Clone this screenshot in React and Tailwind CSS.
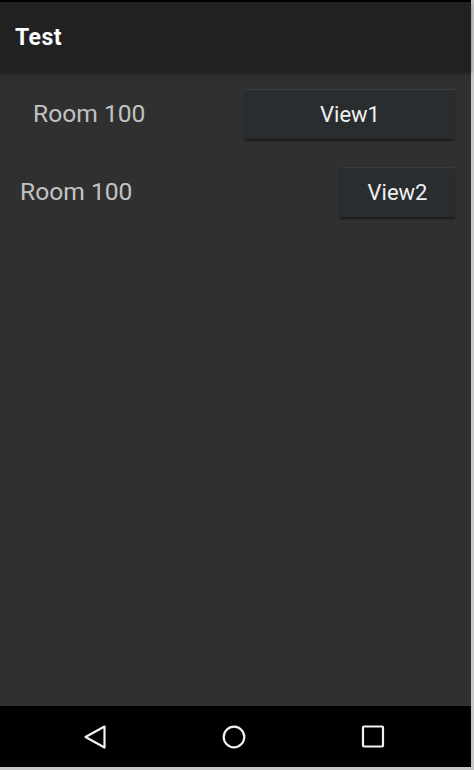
const Row = ({ label, btn, labelPad, btnWidth }) => (
  <div className="flex items-center justify-between h-[50px]">
    <span className={`${labelPad} pt-[1px] text-[24.6px] text-[#c2c2c2]`}>{label}</span>
    <button
      className={`${btnWidth} h-[50px] bg-[#2a2d30] text-[22px] text-[#f0f0f0] rounded-[2px] border-t border-t-[#3a3d40] shadow-[0_2px_2px_rgba(0,0,0,0.45)]`}
    >
      {btn}
    </button>
  </div>
);

export default function App() {
  return (
    <div
      className="w-[474px] h-[770px] flex flex-col bg-[#c8c8c8]"
      style={{ fontFamily: "Roboto, 'Liberation Sans', sans-serif" }}
    >
      <div className="flex flex-1">
        <div className="w-[471px] flex flex-col">
          <div className="h-[2px] bg-black" />
          <header className="h-[70px] bg-[#212121] flex items-center px-[15px] pt-[3px] shadow-[0_2px_4px_rgba(0,0,0,0.35)] z-10">
            <h1 className="text-[23px] font-bold text-white tracking-[0.4px]">Test</h1>
          </header>
          <main className="flex-1 bg-[#303030] pt-[17px] pr-[16px] flex flex-col gap-[28px]">
            <Row label="Room 100" btn="View1" labelPad="pl-[33px]" btnWidth="w-[210px]" />
            <Row label="Room 100" btn="View2" labelPad="pl-[20px]" btnWidth="w-[115px]" />
          </main>
          <div className="h-[61px] bg-black flex items-center justify-center gap-[115px] pr-[4px]">
            <svg width="24" height="24" viewBox="0 0 24 24">
              <path d="M21.5 1.5 L2.5 12 L21.5 22.5 Z" fill="none" stroke="#f2f2f2" strokeWidth="2.2" strokeLinejoin="round" />
            </svg>
            <svg width="24" height="24" viewBox="0 0 24 24">
              <circle cx="12" cy="12" r="10.3" fill="none" stroke="#f2f2f2" strokeWidth="2.2" />
            </svg>
            <svg width="24" height="24" viewBox="0 0 24 24">
              <rect x="2" y="1.5" width="20" height="20" rx="1" fill="none" stroke="#f2f2f2" strokeWidth="2.2" />
            </svg>
          </div>
        </div>
        <div className="w-[3px]" />
      </div>
      <div className="h-[3px]" />
    </div>
  );
}
